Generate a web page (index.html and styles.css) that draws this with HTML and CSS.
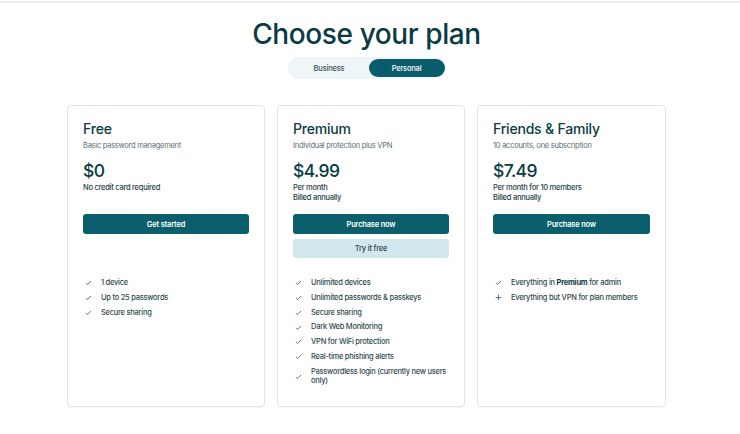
FILE: index.html
```html
<!DOCTYPE html>
<html lang="en">
<head>
<meta charset="utf-8">
<title>Choose your plan</title>
<link rel="stylesheet" href="styles.css">
</head>
<body>
<div class="topline"></div>
<main class="page">
  <h1 class="title">Choose your plan</h1>
  <div class="toggle">
    <span class="toggle-opt">Business</span>
    <span class="toggle-opt active">Personal</span>
  </div>
  <section class="plans">
    <article class="card">
      <h2 class="plan-name">Free</h2>
      <p class="plan-sub">Basic password management</p>
      <p class="price">$0</p>
      <p class="note">No credit card required</p>
      <div class="actions">
        <button class="btn primary">Get started</button>
      </div>
      <ul class="features">
        <li><svg class="ic" viewBox="0 0 8 8"><polyline points="1,4.4 3,6.2 7,2.2"/></svg><span>1 device</span></li>
        <li><svg class="ic" viewBox="0 0 8 8"><polyline points="1,4.4 3,6.2 7,2.2"/></svg><span>Up to 25 passwords</span></li>
        <li><svg class="ic" viewBox="0 0 8 8"><polyline points="1,4.4 3,6.2 7,2.2"/></svg><span>Secure sharing</span></li>
      </ul>
    </article>
    <article class="card">
      <h2 class="plan-name">Premium</h2>
      <p class="plan-sub">Individual protection plus VPN</p>
      <p class="price">$4.99</p>
      <p class="note">Per month<br>Billed annually</p>
      <div class="actions">
        <button class="btn primary">Purchase now</button>
        <button class="btn secondary">Try it free</button>
      </div>
      <ul class="features">
        <li><svg class="ic" viewBox="0 0 8 8"><polyline points="1,4.4 3,6.2 7,2.2"/></svg><span>Unlimited devices</span></li>
        <li><svg class="ic" viewBox="0 0 8 8"><polyline points="1,4.4 3,6.2 7,2.2"/></svg><span>Unlimited passwords &amp; passkeys</span></li>
        <li><svg class="ic" viewBox="0 0 8 8"><polyline points="1,4.4 3,6.2 7,2.2"/></svg><span>Secure sharing</span></li>
        <li><svg class="ic" viewBox="0 0 8 8"><polyline points="1,4.4 3,6.2 7,2.2"/></svg><span>Dark Web Monitoring</span></li>
        <li><svg class="ic" viewBox="0 0 8 8"><polyline points="1,4.4 3,6.2 7,2.2"/></svg><span>VPN for WiFi protection</span></li>
        <li><svg class="ic" viewBox="0 0 8 8"><polyline points="1,4.4 3,6.2 7,2.2"/></svg><span>Real-time phishing alerts</span></li>
        <li><svg class="ic" viewBox="0 0 8 8"><polyline points="1,4.4 3,6.2 7,2.2"/></svg><span>Passwordless login (currently new users only)</span></li>
      </ul>
    </article>
    <article class="card">
      <h2 class="plan-name">Friends &amp; Family</h2>
      <p class="plan-sub">10 accounts, one subscription</p>
      <p class="price">$7.49</p>
      <p class="note">Per month for 10 members<br>Billed annually</p>
      <div class="actions">
        <button class="btn primary">Purchase now</button>
      </div>
      <ul class="features">
        <li><svg class="ic" viewBox="0 0 8 8"><polyline points="1,4.4 3,6.2 7,2.2"/></svg><span>Everything in <b>Premium</b> for admin</span></li>
        <li><svg class="ic" viewBox="0 0 8 8"><path d="M4 0.8V7.2M0.8 4H7.2"/></svg><span>Everything but VPN for plan members</span></li>
      </ul>
    </article>
  </section>
</main>
</body>
</html>
```

FILE: styles.css
```css
* { box-sizing: border-box; }
html, body { margin: 0; padding: 0; background: #ffffff; }
body {
  font-family: "Inter", "Noto Sans", sans-serif;
  color: #0b3a44;
  width: 740px;
  height: 434px;
  overflow: hidden;
}
.topline {
  height: 2px;
  margin-top: 1px;
  background: #eeeeee;
}
.page {
  width: 733px;
  display: flex;
  flex-direction: column;
  align-items: center;
}
.title {
  margin: 13px 0 0;
  font-size: 28px;
  line-height: 36px;
  font-weight: 500;
  letter-spacing: -0.4px;
  color: #0a3b45;
}
.toggle {
  margin-top: 5px;
  width: 158px;
  height: 22px;
  padding: 2px 1px 2px 2px;
  border-radius: 11px;
  background: #eef6f8;
  display: grid;
  grid-template-columns: 79px 76px;
}
.toggle-opt {
  display: flex;
  align-items: center;
  justify-content: center;
  font-size: 7.5px;
  font-weight: 500;
  letter-spacing: -0.2px;
  color: #3a5258;
  border-radius: 9px;
}
.toggle-opt.active {
  background: #0b5c6a;
  color: #ffffff;
}
.plans {
  margin-top: 26px;
  display: grid;
  grid-template-columns: 198px 188px 189px;
  column-gap: 12px;
  align-items: stretch;
}
.card {
  height: 302px;
  border: 1px solid #e2e4e5;
  border-radius: 4px;
  padding: 14px 15px 0;
  box-shadow: 0 1px 2px rgba(0, 0, 0, 0.04);
  display: flex;
  flex-direction: column;
}
.plan-name {
  margin: 0;
  font-size: 14px;
  line-height: 18px;
  font-weight: 500;
  letter-spacing: -0.2px;
  color: #0a3b45;
}
.plan-sub {
  margin: 3px 0 0;
  font-size: 7.5px;
  line-height: 9px;
  letter-spacing: -0.25px;
  color: #5d6d72;
}
.price {
  margin: 10px 0 0;
  font-size: 17.5px;
  line-height: 22px;
  font-weight: 500;
  letter-spacing: -0.6px;
  color: #0a3b45;
}
.note {
  margin: 1px 0 0;
  min-height: 20px;
  font-size: 7.5px;
  line-height: 10px;
  font-weight: 500;
  letter-spacing: -0.25px;
  color: #25424a;
}
.actions {
  margin-top: 11px;
  min-height: 45px;
  display: flex;
  flex-direction: column;
  gap: 5px;
}
.btn {
  display: block;
  width: 100%;
  height: 20px;
  border: 0;
  border-radius: 3px;
  font-family: inherit;
  font-size: 7.5px;
  font-weight: 600;
  letter-spacing: -0.2px;
  padding: 0;
}
.btn.primary {
  background: #0b5f6d;
  color: #ffffff;
}
.btn.secondary {
  height: 19px;
  background: #d2e8ec;
  color: #1f4750;
  font-weight: 500;
}
.features {
  list-style: none;
  margin: 19px 0 0;
  padding: 0;
  display: flex;
  flex-direction: column;
  gap: 5.3px;
}
.features li {
  display: flex;
  align-items: center;
  font-size: 7.5px;
  line-height: 9.5px;
  font-weight: 500;
  letter-spacing: -0.25px;
  color: #2f4a51;
}
.features li b { font-weight: 700; color: #0a3b45; }
.ic {
  flex: none;
  width: 7px;
  height: 7px;
  margin: 0 9px 0 2px;
  fill: none;
  stroke: #45636a;
  stroke-width: 1;
}
```
